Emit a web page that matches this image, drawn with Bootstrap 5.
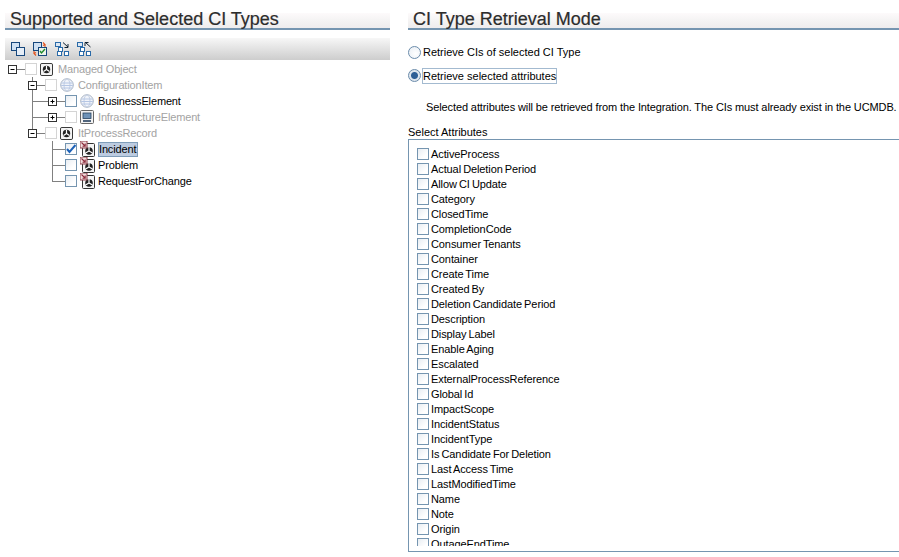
<!DOCTYPE html>
<html><head><meta charset="utf-8"><title>CI Types</title>
<link rel="stylesheet" href="https://cdn.jsdelivr.net/npm/bootstrap@5.3.0/dist/css/bootstrap.min.css">
<style>
html,body{height:557px;overflow:hidden}
body{font:11px/15px "Liberation Sans",Arial,sans-serif;color:#000;background:#fff}
.page{height:557px;padding-top:13px}
.leftp{width:390px;padding-left:5px;flex:none}
.rightp{margin-left:18px;flex:1;min-width:0}
.band{height:17px;background:linear-gradient(#fdfafb,#f5f4f4 45%,#eeeced);border-bottom:2px solid #7595b0;font-size:18px;line-height:12px;color:#2c2c2c;padding-left:5px;white-space:nowrap;-webkit-text-stroke:.2px #2c2c2c}
.tools{height:22px;margin-top:8px;background:linear-gradient(#f7f7f7,#cdcdcd);padding-left:6px;gap:8px}
.tree{margin-top:1px;margin-left:-5px}
.trow{height:16px;color:#000;white-space:nowrap;letter-spacing:-.15px}
.trow svg{display:block;flex:none}
.off{color:#a3a3a3}
.cbx{width:12px;height:12px;flex:none;border:1px solid #7595b0;background:linear-gradient(135deg,#e8edf2,#fff 70%);display:block}
.off .cbx{border-color:#d4d4d4;background:#fff}
.ticon{margin-left:3px}
.lab5{margin-left:5px}
.lab4{margin-left:4px}
.lab3{margin-left:3px}
.sel{background:#bccbe0;border:1px solid #7f9db9;padding:0 1px 0 0;height:15px;line-height:13px}
.radios{margin-top:15px;padding-left:0}
.rrow{height:15px;gap:2px}
.rdo{width:13px;height:13px;flex:none;border-radius:50%;border:1px solid #6b8cab;background:radial-gradient(circle at 60% 60%,#fff,#e6ecf3);display:block}
.rdo.on{background:radial-gradient(circle,#2e5f96 0 3px,#dfe6ee 4px)}
.focus{border:1px solid #a3bad0;margin-left:-1px;height:16px;line-height:14px}
.info{margin:17px 0 0 18px;white-space:nowrap;letter-spacing:-.11px}
.attrlab{margin-top:11px;height:13px;line-height:13px}
.attrbox{height:413px;border:1px solid #7595b0;border-right:0;padding:7px 0 0 8px}
.attrlist{height:399px;overflow:hidden}
.arow{height:15px;gap:2px;white-space:nowrap;line-height:15px;word-spacing:-.8px;letter-spacing:-.1px}
.arow .cbx{margin-top:-1px}
</style></head><body>
<svg width="0" height="0" class="d-block" aria-hidden="true"><defs>
<symbol id="obj" viewBox="0 0 14 14"><rect x=".5" y=".5" width="13" height="13" rx="1.500" fill="#f4f4f4" stroke="#222"/><circle cx="7" cy="7" r="4" fill="#222"/><path d="M7 7V3.200M7 7 3.800 9.200M7 7l3.200 2.200" stroke="#fff" stroke-width="1.300"/></symbol>
<symbol id="globe" viewBox="0 0 14 14"><circle cx="7" cy="7" r="6.300" fill="#f1f4fa" stroke="#a9b4c4"/><ellipse cx="7" cy="7" rx="3" ry="6" fill="none" stroke="#c3cfe4"/><path d="M1.500 5h11M1.200 7.500h11.600M2 10h10" stroke="#b5c6e4"/></symbol>
<symbol id="mon" viewBox="0 0 14 14"><rect x=".5" y=".5" width="13" height="13" rx="1" fill="#f2f2f2" stroke="#666"/><rect x="3" y="3" width="8" height="5.500" fill="#6f93b8" stroke="#27425f" stroke-width=".8"/><path d="M3 11h8" stroke="#27425f" stroke-width="1.600"/></symbol>
<symbol id="inc" viewBox="0 0 15 16"><rect x="2.500" y="2.500" width="12" height="13" rx="1" fill="#f5f5f5" stroke="#333"/><circle cx="9" cy="10" r="3.800" fill="#222"/><path d="M9 10V6M9 10 5.500 12M9 10l3.500 2" stroke="#fff" stroke-width="1.200"/><rect x="0" y="0" width="7" height="7" fill="#f0dede" stroke="#8c3a46"/><path d="M1.500 1.500l3.500 3.500M5.200 2.500v2.700H2.500" fill="none" stroke="#8c2a3a" stroke-width="1.100"/></symbol>
</defs></svg>
<main class="page d-flex">
<section class="leftp">
<h1 class="band fw-normal m-0">Supported and Selected CI Types</h1>
<div class="tools d-flex align-items-center">
<svg width="14" height="14" viewBox="0 0 14 14" class="d-block"><rect x=".5" y=".5" width="8" height="8" fill="#cfe0f2" stroke="#17477c"/><rect x="5.500" y="5.500" width="8" height="8" fill="#e6eef7" stroke="#17477c"/></svg>
<svg width="14" height="14" viewBox="0 0 14 14" class="d-block"><rect x=".5" y=".5" width="8" height="8" fill="#cfe0f2" stroke="#17477c"/><rect x="5.500" y="5.500" width="8" height="8" fill="#eef4ea" stroke="#17477c"/><path d="M7 9l1.500 2L12 7" fill="none" stroke="#1e8a2c" stroke-width="1.400"/><path d="M10 .5l2 2-2 1M12 2.500V5M3 13.500l-2-2 2-1M1 11.500V9" fill="none" stroke="#e2521c" stroke-width="1.100"/></svg>
<svg width="14" height="14" viewBox="0 0 14 14" class="d-block"><rect x=".5" y=".5" width="5" height="4" fill="#dce8f4" stroke="#2a6aa8"/><rect x="3.500" y="5.500" width="4" height="4" fill="#fff" stroke="#2a6aa8"/><rect x="9.500" y="9.500" width="4" height="4" fill="#fff" stroke="#2a6aa8"/><rect x="2.500" y="9.500" width="4" height="4" fill="#fff" stroke="#2a6aa8"/><path d="M8 .5l5 4.500M13 2v3.500H9.500" fill="none" stroke="#123" stroke-width="1"/></svg>
<svg width="14" height="14" viewBox="0 0 14 14" class="d-block"><rect x=".5" y=".5" width="5" height="4" fill="#dce8f4" stroke="#2a6aa8"/><rect x="3.500" y="5.500" width="4" height="4" fill="#fff" stroke="#2a6aa8"/><rect x="9.500" y="9.500" width="4" height="4" fill="#fff" stroke="#2a6aa8"/><rect x="2.500" y="9.500" width="4" height="4" fill="#fff" stroke="#2a6aa8"/><path d="M13.500 5L8.500 .5M8 4V.5h3.500" fill="none" stroke="#123" stroke-width="1"/></svg>
</div>
<div class="tree">
<div class="trow off d-flex align-items-center"><svg width="25" height="16"><path d="M16 8.500h9" stroke="#808080"/><rect x="8.500" y="4.500" width="8" height="8" fill="#fff" stroke="#333"/><path d="M10.500 8.500h4" stroke="#000"/></svg><span class="cbx"></span><svg class="ticon" width="13" height="13"><use href="#obj"/></svg><span class="lab5">Managed Object</span></div>
<div class="trow off d-flex align-items-center"><svg width="45" height="16"><path d="M36 8.500h9M32.500 0v16" stroke="#808080"/><rect x="28.500" y="4.500" width="8" height="8" fill="#fff" stroke="#333"/><path d="M30.500 8.500h4" stroke="#000"/></svg><span class="cbx"></span><svg class="ticon" width="14" height="14"><use href="#globe"/></svg><span class="lab4">ConfigurationItem</span></div>
<div class="trow d-flex align-items-center"><svg width="65" height="16"><path d="M32.500 0v16M33 8.500h15M56 8.500h9" stroke="#808080"/><rect x="48.500" y="4.500" width="8" height="8" fill="#fff" stroke="#333"/><path d="M50.500 8.500h4M52.500 6.500v4" stroke="#000"/></svg><span class="cbx"></span><svg class="ticon" width="14" height="14"><use href="#globe"/></svg><span class="lab4">BusinessElement</span></div>
<div class="trow off d-flex align-items-center"><svg width="65" height="16"><path d="M32.500 0v16M33 8.500h15M56 8.500h9" stroke="#808080"/><rect x="48.500" y="4.500" width="8" height="8" fill="#fff" stroke="#333"/><path d="M50.500 8.500h4M52.500 6.500v4" stroke="#000"/></svg><span class="cbx"></span><svg class="ticon" width="14" height="14"><use href="#mon"/></svg><span class="lab4">InfrastructureElement</span></div>
<div class="trow off d-flex align-items-center"><svg width="45" height="16"><path d="M36 8.500h9M32.500 0v5" stroke="#808080"/><rect x="28.500" y="4.500" width="8" height="8" fill="#fff" stroke="#333"/><path d="M30.500 8.500h4" stroke="#000"/></svg><span class="cbx"></span><svg class="ticon" width="13" height="13"><use href="#obj"/></svg><span class="lab5">ItProcessRecord</span></div>
<div class="trow d-flex align-items-center"><svg width="65" height="16"><path d="M52.500 0v16M53 8.500h12" stroke="#808080"/></svg><span class="cbx d-flex"><svg width="10" height="10" viewBox="0 0 10 10"><path d="M1 5l2.500 3L9.500 1" fill="none" stroke="#1d62b8" stroke-width="2"/></svg></span><svg class="ticon" width="15" height="16"><use href="#inc"/></svg><span class="lab3 sel">Incident</span></div>
<div class="trow d-flex align-items-center"><svg width="65" height="16"><path d="M52.500 0v16M53 8.500h12" stroke="#808080"/></svg><span class="cbx"></span><svg class="ticon" width="15" height="16"><use href="#inc"/></svg><span class="lab3">Problem</span></div>
<div class="trow d-flex align-items-center"><svg width="65" height="16"><path d="M52.500 0v9M53 8.500h12" stroke="#808080"/></svg><span class="cbx"></span><svg class="ticon" width="15" height="16"><use href="#inc"/></svg><span class="lab3">RequestForChange</span></div>
</div>
</section>
<section class="rightp">
<h1 class="band fw-normal m-0">CI Type Retrieval Mode</h1>
<div class="radios">
<div class="rrow d-flex align-items-center"><span class="rdo"></span><span>Retrieve CIs of selected CI Type</span></div>
<div class="rrow d-flex align-items-center mt-2"><span class="rdo on"></span><span class="focus">Retrieve selected attributes</span></div>
</div>
<p class="info mb-0">Selected attributes will be retrieved from the Integration. The CIs must already exist in the UCMDB.</p>
<div class="attrlab">Select Attributes</div>
<div class="attrbox"><div class="attrlist">
<div class="arow d-flex align-items-center"><span class="cbx"></span><span>ActiveProcess</span></div>
<div class="arow d-flex align-items-center"><span class="cbx"></span><span>Actual Deletion Period</span></div>
<div class="arow d-flex align-items-center"><span class="cbx"></span><span>Allow CI Update</span></div>
<div class="arow d-flex align-items-center"><span class="cbx"></span><span>Category</span></div>
<div class="arow d-flex align-items-center"><span class="cbx"></span><span>ClosedTime</span></div>
<div class="arow d-flex align-items-center"><span class="cbx"></span><span>CompletionCode</span></div>
<div class="arow d-flex align-items-center"><span class="cbx"></span><span>Consumer Tenants</span></div>
<div class="arow d-flex align-items-center"><span class="cbx"></span><span>Container</span></div>
<div class="arow d-flex align-items-center"><span class="cbx"></span><span>Create Time</span></div>
<div class="arow d-flex align-items-center"><span class="cbx"></span><span>Created By</span></div>
<div class="arow d-flex align-items-center"><span class="cbx"></span><span>Deletion Candidate Period</span></div>
<div class="arow d-flex align-items-center"><span class="cbx"></span><span>Description</span></div>
<div class="arow d-flex align-items-center"><span class="cbx"></span><span>Display Label</span></div>
<div class="arow d-flex align-items-center"><span class="cbx"></span><span>Enable Aging</span></div>
<div class="arow d-flex align-items-center"><span class="cbx"></span><span>Escalated</span></div>
<div class="arow d-flex align-items-center"><span class="cbx"></span><span>ExternalProcessReference</span></div>
<div class="arow d-flex align-items-center"><span class="cbx"></span><span>Global Id</span></div>
<div class="arow d-flex align-items-center"><span class="cbx"></span><span>ImpactScope</span></div>
<div class="arow d-flex align-items-center"><span class="cbx"></span><span>IncidentStatus</span></div>
<div class="arow d-flex align-items-center"><span class="cbx"></span><span>IncidentType</span></div>
<div class="arow d-flex align-items-center"><span class="cbx"></span><span>Is Candidate For Deletion</span></div>
<div class="arow d-flex align-items-center"><span class="cbx"></span><span>Last Access Time</span></div>
<div class="arow d-flex align-items-center"><span class="cbx"></span><span>LastModifiedTime</span></div>
<div class="arow d-flex align-items-center"><span class="cbx"></span><span>Name</span></div>
<div class="arow d-flex align-items-center"><span class="cbx"></span><span>Note</span></div>
<div class="arow d-flex align-items-center"><span class="cbx"></span><span>Origin</span></div>
<div class="arow d-flex align-items-center"><span class="cbx"></span><span>OutageEndTime</span></div>
</div></div>
</section>
</main>
<script src="https://cdn.jsdelivr.net/npm/bootstrap@5.3.0/dist/js/bootstrap.bundle.min.js"></script>
</body></html>
